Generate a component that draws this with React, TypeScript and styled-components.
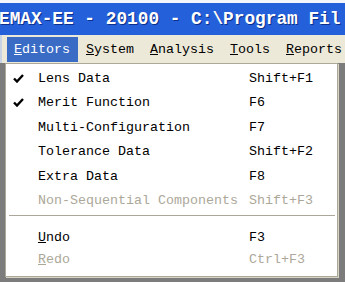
import React from 'react';
import styled, { createGlobalStyle } from 'styled-components';

type Item = {
	label: string;
	key?: string;
	checked?: boolean;
	disabled?: boolean;
	mnemonic?: number;
};

const topItems: Item[] = [
	{ label: 'Lens Data', key: 'Shift+F1', checked: true },
	{ label: 'Merit Function', key: 'F6', checked: true },
	{ label: 'Multi-Configuration', key: 'F7' },
	{ label: 'Tolerance Data', key: 'Shift+F2' },
	{ label: 'Extra Data', key: 'F8' },
	{ label: 'Non-Sequential Components', key: 'Shift+F3', disabled: true },
];

const bottomItems: Item[] = [
	{ label: 'Undo', key: 'F3', mnemonic: 0 },
	{ label: 'Redo', key: 'Ctrl+F3', disabled: true, mnemonic: 0 },
];

const menus = ['Editors', 'System', 'Analysis', 'Tools', 'Reports'];

function Mnemonic({ text, index }: { text: string; index?: number }) {
	if (index === undefined) return <>{text}</>;
	return (
		<>
			{text.slice(0, index)}
			<u>{text[index]}</u>
			{text.slice(index + 1)}
		</>
	);
}

function Check() {
	return (
		<svg width="11" height="9" viewBox="0 0 11 9">
			<path d="M1 4.5 L4 7.5 L10 1" fill="none" stroke="#000" strokeWidth="2.4" />
		</svg>
	);
}

export default function App() {
	return (
		<>
			<GlobalStyle />
			<Window>
				<TitleBar>
					<TitleText>EMAX-EE - 20100 - C:\Program Fil</TitleText>
				</TitleBar>
				<MenuBar>
					{menus.map((m, i) => (
						<MenuTitle key={m} $active={i === 0}>
							<Mnemonic text={m} index={0} />
						</MenuTitle>
					))}
				</MenuBar>
				<Body>
					<Dropdown>
						{topItems.map((item) => (
							<Row key={item.label} $disabled={item.disabled} $height={24.5}>
								<CheckCell>{item.checked && <Check />}</CheckCell>
								<Label>
									<Mnemonic text={item.label} index={item.mnemonic} />
								</Label>
								<Shortcut>{item.key}</Shortcut>
							</Row>
						))}
						<Separator />
						{bottomItems.map((item) => (
							<Row key={item.label} $disabled={item.disabled} $height={22}>
								<CheckCell />
								<Label>
									<Mnemonic text={item.label} index={item.mnemonic} />
								</Label>
								<Shortcut>{item.key}</Shortcut>
							</Row>
						))}
					</Dropdown>
				</Body>
			</Window>
		</>
	);
}

const GlobalStyle = createGlobalStyle`
	html, body {
		margin: 0;
		padding: 0;
		background: #7c7c7c;
		overflow: hidden;
	}
`;

const Window = styled.div`
	display: flex;
	flex-direction: column;
	width: 345px;
	height: 282px;
	font-family: 'Liberation Mono', 'DejaVu Sans Mono', monospace;
`;

const TitleBar = styled.div`
	display: flex;
	align-items: center;
	height: 32px;
	background: #2360da;
	border-top: 3px solid #f4f6fb;
	overflow: hidden;
	white-space: nowrap;
`;

const TitleText = styled.span`
	margin-left: -1px;
	font-size: 17.8px;
	font-weight: 700;
	color: #fff;
	text-shadow: 1px 1px 0 #0b2f8a;
`;

const MenuBar = styled.div`
	display: flex;
	align-items: stretch;
	height: 25px;
	padding: 2px 0 1px 5px;
	background: #ece9d8;
	border-left: 2px solid #c9d3e6;
	overflow: hidden;
	white-space: nowrap;
`;

const MenuTitle = styled.div<{ $active?: boolean }>`
	display: flex;
	align-items: center;
	padding: 0 8px 0 7px;
	margin-right: 1px;
	font-size: 13.33px;
	color: ${(p) => (p.$active ? '#fff' : '#000')};
	background: ${(p) => (p.$active ? '#3a6cc6' : 'transparent')};
`;

const Body = styled.div`
	flex: 1;
	display: flex;
	padding: 0 7px 5px 5px;
	background: #7c7c7c;
`;

const Dropdown = styled.div`
	flex: 1;
	display: flex;
	flex-direction: column;
	padding-top: 2px;
	background: #fff;
	border: 1px solid #aca899;
	box-shadow: 1px 1px 0 #d8d4c4;
`;

const Row = styled.div<{ $disabled?: boolean; $height: number }>`
	display: flex;
	align-items: center;
	height: ${(p) => p.$height}px;
	font-size: 13.33px;
	white-space: nowrap;
	color: ${(p) => (p.$disabled ? '#aca899' : '#000')};
`;

const CheckCell = styled.div`
	display: flex;
	align-items: center;
	width: 25px;
	padding-left: 7px;
`;

const Label = styled.span`
	width: 211px;
`;

const Shortcut = styled.span``;

const Separator = styled.div`
	height: 1px;
	margin: 2px 2px 9px 3px;
	background: #aca899;
	border-bottom: 1px solid #fff;
`;
